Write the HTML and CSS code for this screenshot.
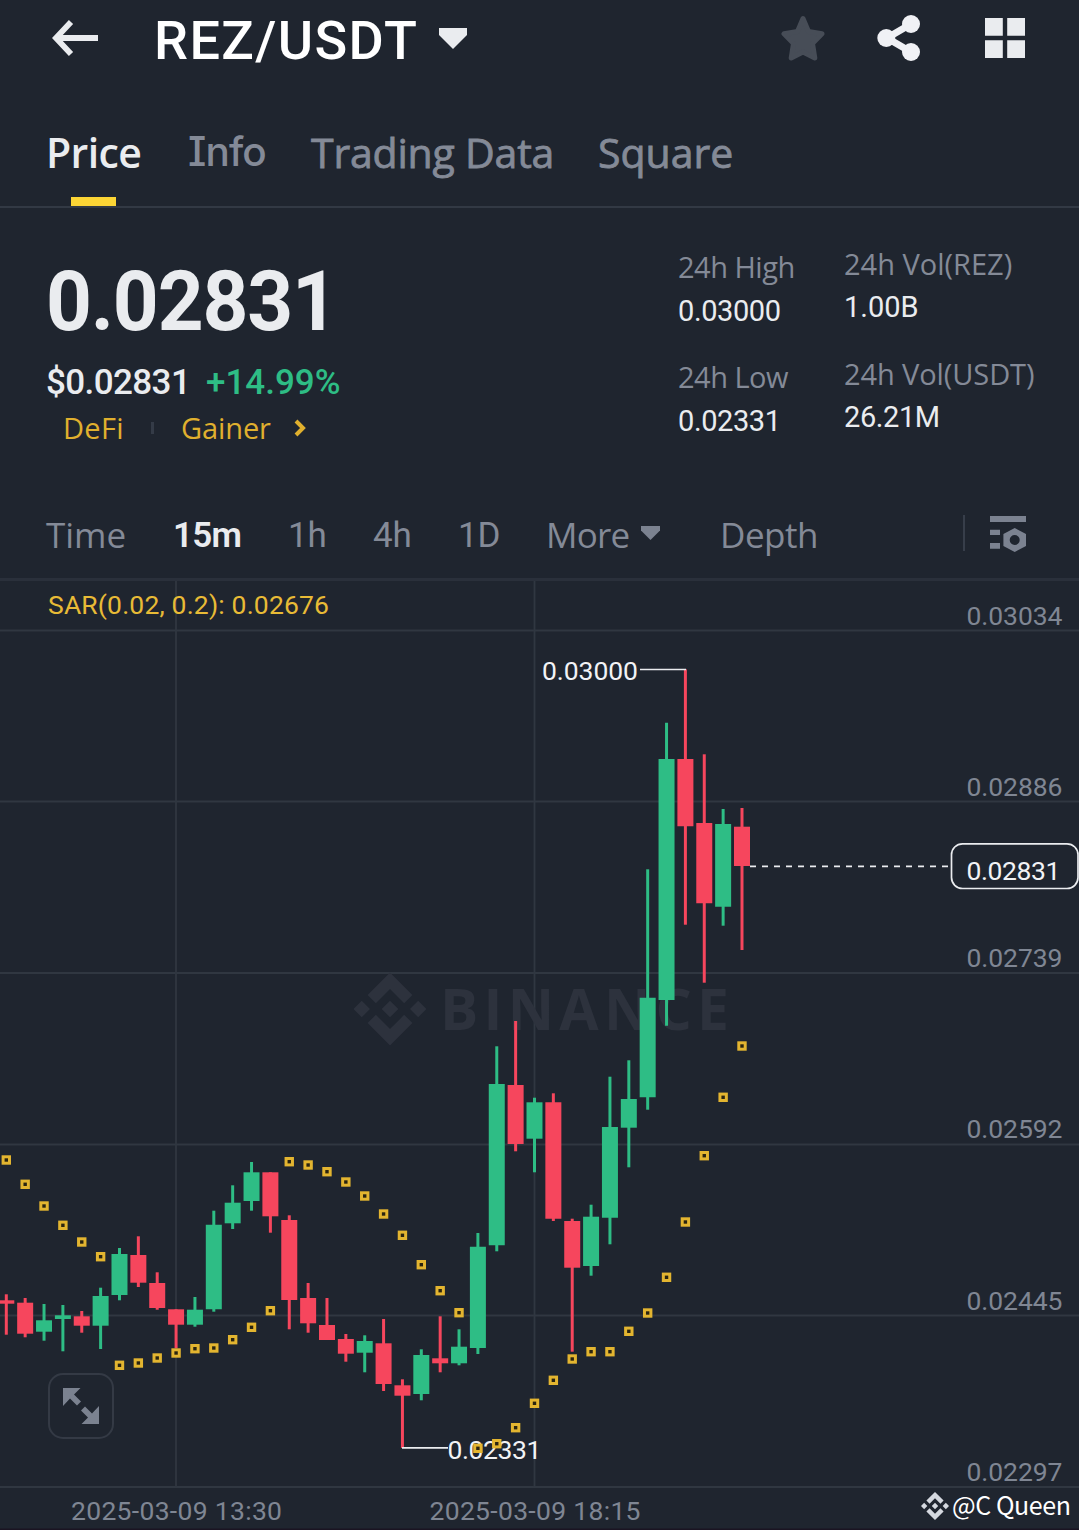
FILE: index.html
```html
<!DOCTYPE html>
<html lang="en">
<head>
<meta charset="utf-8">
<title>REZ/USDT</title>
<link rel="stylesheet" href="styles.css">
</head>
<body>
<div class="app">
  <header class="topbar">
    <svg class="back" viewBox="0 0 46 36" width="46" height="36"><path d="M4 18H46M19 2 4 18 19 34" fill="none" stroke="#eaecef" stroke-width="5.800"/></svg>
    <h1 class="pair">REZ/USDT</h1>
    <svg class="pair-caret" viewBox="0 0 28 21" width="28" height="21"><path d="M0 0H28V7L14 21 0 7Z" fill="#eaecef"/></svg>
    <div class="actions">
      <svg viewBox="0 0 46 46" width="46" height="46"><path d="M23 3.500 28.500 16.500 42 18.800 32.500 28.500 34.800 43 23 37 11.200 43 13.500 28.500 4 18.800 17.500 16.500Z" fill="#474d57" stroke="#474d57" stroke-width="5" stroke-linejoin="round"/></svg>
      <svg viewBox="0 0 44 46" width="44" height="46"><path d="M34 9 10 23 34 37" fill="none" stroke="#f0f1f5" stroke-width="7"/><g fill="#f0f1f5"><circle cx="34" cy="9" r="9"/><circle cx="9.300" cy="23" r="9"/><circle cx="34" cy="37" r="9"/></g></svg>
      <svg viewBox="0 0 40 40" width="40" height="40"><path d="M0 0h17.800v17.800H0zM22.200 0H40v17.800H22.200zM0 22.200h17.800V40H0zM22.200 22.200H40V40H22.200z" fill="#eaecef"/></svg>
    </div>
  </header>

  <nav class="tabs">
    <span class="tab tab-active">Price</span>
    <span class="tab tab-info">Info</span>
    <span class="tab tab-data">Trading Data</span>
    <span class="tab tab-square">Square</span>
  </nav>

  <section class="summary">
    <div class="quote">
      <div class="last">0.02831</div>
      <div class="sub"><span class="fiat">$0.02831</span><span class="change">+14.99%</span></div>
      <div class="tags">
        <span class="tag-defi">DeFi</span><i class="tag-sep"></i><span class="tag-gainer">Gainer</span>
        <svg viewBox="0 0 12 18" width="12" height="18"><path d="M2 2 9 9 2 16" fill="none" stroke="#e0b02e" stroke-width="4"/></svg>
      </div>
    </div>
    <div class="stats stats-range">
      <div class="label l-high">24h High</div><div class="value">0.03000</div>
      <div class="label l-low">24h Low</div><div class="value">0.02331</div>
    </div>
    <div class="stats stats-volume">
      <div class="label l-rez">24h Vol(REZ)</div><div class="value v-rez">1.00B</div>
      <div class="label l-usdt">24h Vol(USDT)</div><div class="value v-usdt">26.21M</div>
    </div>
  </section>

  <nav class="intervals">
    <span class="i-time">Time</span>
    <span class="i-active">15m</span>
    <span class="i-num">1h</span>
    <span class="i-num">4h</span>
    <span class="i-num">1D</span>
    <span class="i-more">More</span>
    <svg class="more-caret" viewBox="0 0 19 14" width="19" height="14"><path d="M0 0H19V4.500L9.500 14 0 4.500Z" fill="#7b8290"/></svg>
    <span class="i-depth">Depth</span>
    <i class="divider"></i>
    <svg class="settings" viewBox="0 0 36 36" width="36" height="36"><path d="M0 0H36V6H0ZM0 13.700H10V19H0ZM0 27H10V32.700H0Z" fill="#7b8290"/><path d="M24.700 12 36 18V30L24.700 36 13.400 30V18ZM24.700 19a5 5 0 1 0 0 10 5 5 0 1 0 0-10Z" fill="#7b8290" fill-rule="evenodd"/></svg>
  </nav>

  <main class="chart">
    <svg class="plot" viewBox="0 581 1079 949" width="1079" height="949">
      <g class="grid">
        <path d="M0 630.500H1079M0 801.500H1079M0 973H1079M0 1144.500H1079M0 1315.500H1079M0 1487H1079"/>
        <path d="M176 581V1487M534.500 581V1487"/>
      </g>
      <g class="watermark">
        <svg x="353.500" y="972.500" width="73" height="73" viewBox="0 0 126.610 126.610"><use href="#binance"/></svg>
        <text x="440" y="1029.500" textLength="289">BINANCE</text>
      </g>
      <g id="candles"></g>
      <g class="callouts">
        <path d="M640 669.500H686M402 1447.800H448"/>
        <text x="542" y="680" textLength="96">0.03000</text>
        <text x="447.500" y="1459" textLength="94">0.02331</text>
      </g>
      <g id="sar"></g>
      <text class="indicator" x="48" y="614" textLength="281">SAR(0.02, 0.2): 0.02676</text>
      <g class="axis">
        <text x="966.500" y="625" textLength="96">0.03034</text>
        <text x="966.500" y="796" textLength="96">0.02886</text>
        <text x="966.500" y="967" textLength="96">0.02739</text>
        <text x="966.500" y="1138" textLength="96">0.02592</text>
        <text x="966.500" y="1310" textLength="96">0.02445</text>
        <text x="966.500" y="1481" textLength="96">0.02297</text>
        <text x="71" y="1520" textLength="211">2025-03-09 13:30</text>
        <text x="429.500" y="1520" textLength="211">2025-03-09 18:15</text>
      </g>
      <path class="last-line" d="M750 866.300H951"/>
      <rect class="last-box" x="951.500" y="843.800" width="126.500" height="44.700" rx="11"/>
      <text class="last-text" x="966.500" y="880" textLength="94">0.02831</text>
      <svg x="921" y="1492" width="28" height="28" viewBox="0 0 126.610 126.610" fill="#d5d9e0">
        <path id="binance" d="M38.730 53.200l24.590-24.580 24.600 24.600 14.300-14.310L63.320 0 24.420 38.900zM0 63.310l14.300-14.310 14.310 14.310-14.310 14.300zM38.730 73.410l24.590 24.590 24.600-24.600 14.310 14.290-38.900 38.910-38.910-38.880zM98 63.310l14.300-14.310 14.310 14.300-14.310 14.320zM77.830 63.300L63.320 48.780 48.810 63.280l14.510 14.500z"/>
      </svg>
      <text class="author" x="952" y="1515" textLength="119">@C Queen</text>
      <rect class="base" x="0" y="1528.500" width="1079" height="1.500"/>
    </svg>
    <button class="expand" aria-label="Full screen">
      <svg viewBox="0 0 36 36" width="36" height="36"><path d="M0 0H17.500L11 6.500 18 13.500 14 17.500 7 10.500 0 18ZM36 36H18.500L25 29.500 18 22.500 22 18.500 29 25.500 36 18Z" fill="#7b8290"/></svg>
    </button>
  </main>
</div>
<script src="chart.js"></script>
</body>
</html>
```
FILE: styles.css
```css
* { box-sizing: border-box; }
body { margin: 0; background: #1f252f; color: #eaecef; font-family: "Open Sans", "Noto Sans", sans-serif; }
svg { display: block; flex: none; }
.app { width: 1079px; height: 1530px; overflow: hidden; display: flex; flex-direction: column; }

.topbar { height: 96px; padding: 0 54px 20px 52px; display: flex; align-items: center; }
.pair { margin: 5px 0 0 56px; width: 285px; font: 500 54px/70px Roboto, sans-serif; letter-spacing: 1.4px; color: #fff; white-space: nowrap; }
.pair-caret { margin-top: 1px; }
.actions { margin-left: auto; display: flex; align-items: center; }
.actions svg + svg { margin-left: 51px; }
.actions svg:last-child { margin-left: 64px; }

.tabs { height: 112px; padding: 28px 0 0 46px; display: grid; grid-template-columns: 142px 123px 287px 200px; border-bottom: 2px solid #323944; font-size: 41px; line-height: 56px; color: #848a97; }
.tab { white-space: nowrap; }
.tab-active { color: #eaecef; font-weight: 600; letter-spacing: -0.6px; }
.tab-active::after { content: ""; display: block; width: 45px; height: 9px; margin: 17px 0 0 25px; background: #fcd535; }
.tab-data, .tab-square { -webkit-text-stroke: 0.8px #848a97; }
.tab-data { letter-spacing: -0.2px; }
.tab-info { font-family: Inter, sans-serif; font-feature-settings: "cv08"; font-size: 40.500px; font-weight: 500; letter-spacing: -0.9px; }

.summary { height: 283px; display: grid; grid-template-columns: 678px 166px 1fr; }
.quote { padding-left: 46px; }
.last { margin-top: 44px; font: 700 83px/100px Roboto, sans-serif; transform: scaleX(0.965); transform-origin: left; letter-spacing: -1.200px; }
.sub { margin-top: 6px; height: 50px; display: flex; font: 500 35px/50px Roboto, sans-serif; }
.fiat { width: 160px; letter-spacing: -0.6px; }
.change { color: #2ebd85; }
.tags { margin-top: -1px; padding-left: 17px; height: 42px; display: flex; align-items: center; font-size: 29px; line-height: 42px; color: #e0b02e; }
.tag-defi { width: 88px; letter-spacing: 0.3px; }
.tag-sep { width: 3px; height: 12px; background: #343b47; }
.tag-gainer { width: 113px; margin-left: 27px; letter-spacing: -0.1px; }

.stats { font-size: 29px; line-height: 42px; white-space: nowrap; }
.stats-range { padding-top: 38px; }
.stats-volume { padding-top: 35px; }
.label { height: 43px; color: #848a97; }
.l-high, .l-low { letter-spacing: -0.5px; }
.l-usdt { letter-spacing: -0.1px; }
.value { height: 67px; font-family: Roboto, sans-serif; font-size: 29px; line-height: 44px; letter-spacing: -0.4px; }
.v-rez { line-height: 43px; letter-spacing: 0; }
.v-usdt { line-height: 43px; }

.intervals { height: 90px; border-bottom: 3px solid #2a303b; padding: 0 53px 0 46px; display: flex; align-items: center; font-size: 35px; line-height: 50px; color: #848a97; }
.intervals > span { flex: none; white-space: nowrap; }
.i-time { width: 127px; }
.intervals > .i-active { width: 115px; padding-top: 3px; color: #eaecef; font-weight: 600; font-family: Roboto, sans-serif; letter-spacing: -0.8px; }
.intervals > .i-num { width: 85px; padding-top: 3px; font-family: Roboto, sans-serif; letter-spacing: -0.2px; }
.i-more { width: 95px; margin-left: 3px; letter-spacing: -0.8px; }
.more-caret { margin: -3px 60px 0 0; }
.i-depth { letter-spacing: -0.5px; }
.divider { width: 2px; height: 36px; margin: -3px 0 0 auto; background: #373e4a; }
.settings { margin: -2px 0 0 25px; }

.chart { position: relative; height: 949px; }
.plot text { font-family: Roboto, sans-serif; font-size: 26.500px; }
.grid path { fill: none; stroke: #303741; stroke-width: 1.800; }
.watermark { fill: #2d323d; }
.plot .watermark text { font-family: "Open Sans", sans-serif; font-size: 57px; font-weight: 700; }
.callouts path { stroke: #eaecef; stroke-width: 1.700; }
.callouts text, .last-text { fill: #f2f3f6; }
.indicator { fill: #e8bb36; }
.axis text { fill: #7f8693; }
.last-line { stroke: #eaecef; stroke-width: 1.700; stroke-dasharray: 6 6; }
.last-box { fill: #1f252f; stroke: #eaecef; stroke-width: 1.700; }
.plot .author { font-family: "Noto Sans CJK SC", "Noto Sans", sans-serif; font-size: 25px; fill: #fff; }
.base { fill: #1a1422; }
.wick { stroke-width: 3; }
.body { stroke-width: 16; }
.up { stroke: #2ebd85; }
.down { stroke: #f6465d; }
.dot { fill: #2a2410; stroke: #e3b530; stroke-width: 3; }
.expand { position: absolute; left: 48px; top: 792px; width: 66px; height: 66px; padding: 0; display: grid; place-items: center; background: none; border: 2.500px solid #343a45; border-radius: 15px; }
```
FILE: chart.js
```js
// [direction, high, body top, body bottom, low] in plot coordinates
const candles = [
  ['down',1294.3,1300.3,1303.7,1334.7],['down',1298,1302.7,1333.7,1337.3],['up',1304,1320.3,1331.7,1340.7],
  ['up',1305,1315.3,1319,1351.3],['down',1311,1316.3,1325.7,1332.7],['up',1287.7,1296,1325.7,1349],
  ['up',1248,1254,1295,1300.3],['down',1236.3,1255,1282.7,1287],['down',1272.3,1283,1308,1309.7],
  ['down',1309.3,1309.3,1324.7,1348.3],['up',1297,1309.7,1324.7,1326.7],['up',1210.7,1224.7,1309.3,1311.7],
  ['up',1185.3,1202.7,1223.3,1229],['up',1162,1172.3,1201,1210.7],['down',1172.3,1172.3,1216.3,1232.7],
  ['down',1215.3,1220,1300,1329.3],['down',1283,1298,1323.3,1332.7],['down',1298,1325,1340,1340],
  ['down',1334,1339,1353.7,1361.7],['up',1335.3,1341,1352.7,1372.3],['down',1319,1343.3,1384,1391],
  ['down',1379.3,1385.3,1395.7,1448],['up',1349.3,1355,1394,1400.3],['down',1316.3,1358.3,1363.3,1372.3],
  ['up',1329.3,1346.7,1363.3,1365.3],['up',1233,1246.7,1348,1354],['up',1046.3,1084,1245.3,1251.3],
  ['down',1021,1085,1144,1151.3],['up',1097.7,1102.3,1138.7,1172.3],['down',1093.3,1102.3,1218.7,1221],
  ['down',1218.7,1221,1267.7,1351.7],['up',1204.7,1216.7,1266,1275.7],['up',1076.7,1127,1217.7,1244.3],
  ['up',1060.3,1099,1127.7,1167.3],['up',869.3,997.7,1097.3,1109.7],['up',722.7,759,1000,1025.7],
  ['down',669.3,759,826.3,924.7],['down',754.3,823,903.3,982.7],['up',809,824,906.7,925.7],
  ['down',808,826.7,866,950]
];
const sar = [1160,1184.3,1206,1225.3,1242,1256.7,1365.3,1363,1358,1353,1348.7,1348,1339.7,1327.3,1310.7,
  1161.7,1165,1171.7,1182,1196,1214,1235.3,1264.7,1290.7,1312.7,1448.3,1443.7,1427.7,1403.3,1380.3,1359,
  1351.7,1351.7,1331.3,1313,1277.3,1222,1155.7,1097.3,1046];
const xAt = i => 6.3 + 18.864 * i;
document.getElementById('candles').innerHTML = candles.map(([dir, high, top, bottom, low], i) =>
  `<path class="wick ${dir}" d="M${xAt(i)} ${high}V${low}"/><path class="body ${dir}" d="M${xAt(i)} ${top}V${bottom}"/>`).join('');
document.getElementById('sar').innerHTML = sar.map((y, i) =>
  `<rect class="dot" x="${xAt(i) - 3.2}" y="${y - 3.2}" width="6.4" height="6.4"/>`).join('');
```
